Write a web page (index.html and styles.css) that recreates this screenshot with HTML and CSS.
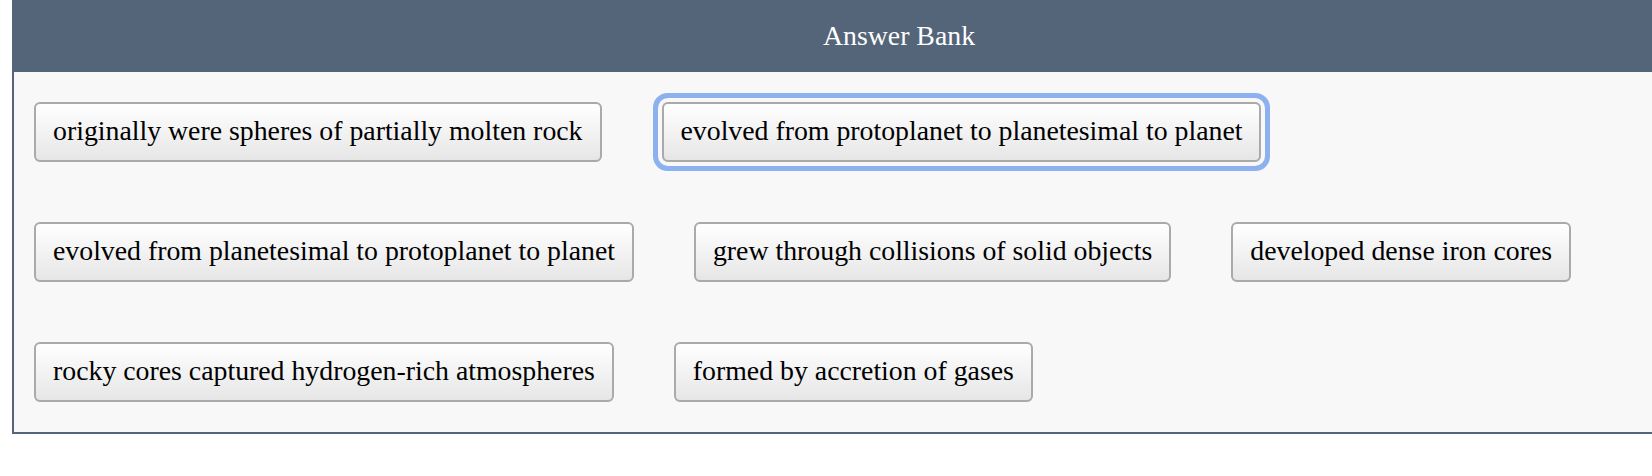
FILE: index.html
```html
<!DOCTYPE html>
<html>
<head>
<meta charset="utf-8">
<link rel="stylesheet" href="styles.css">
</head>
<body>
<div class="bank">
  <div class="bank-head">Answer Bank</div>
  <div class="bank-body">
    <div class="row">
      <button class="chip">originally were spheres of partially molten rock</button>
      <button class="chip focused">evolved from protoplanet to planetesimal to planet</button>
    </div>
    <div class="row">
      <button class="chip">evolved from planetesimal to protoplanet to planet</button>
      <button class="chip">grew through collisions of solid objects</button>
      <button class="chip">developed dense iron cores</button>
    </div>
    <div class="row">
      <button class="chip">rocky cores captured hydrogen-rich atmospheres</button>
      <button class="chip">formed by accretion of gases</button>
    </div>
  </div>
</div>
</body>
</html>
```
FILE: styles.css
```css
html, body {
  margin: 0;
  padding: 0;
  background: #ffffff;
  overflow: hidden;
}
body {
  font-family: "Liberation Serif", "Times New Roman", serif;
  width: 1652px;
  height: 476px;
}
.bank {
  margin-left: 12px;
  width: 1770px;
  border: 2px solid #546479;
  border-top: none;
  background: #f8f8f8;
}
.bank-head {
  height: 72px;
  background: #546479;
  color: #ffffff;
  font-size: 27.8px;
  display: flex;
  align-items: center;
  justify-content: center;
}
.bank-body {
  padding: 30px 20px 30px 20px;
  display: flex;
  flex-direction: column;
  gap: 60px;
}
.row {
  display: flex;
  gap: 60px;
}
.chip {
  height: 60px;
  padding: 0 17px 2px;
  font-family: "Liberation Serif", "Times New Roman", serif;
  font-size: 27.8px;
  color: #000;
  background: linear-gradient(#ffffff, #e6e6e6);
  border: 2px solid #aaaaaa;
  border-radius: 6px;
  white-space: nowrap;
}
.focused {
  box-shadow: 0 0 0 4px #f8f8f8, 0 0 0 9px #8db0ee;
}
```
